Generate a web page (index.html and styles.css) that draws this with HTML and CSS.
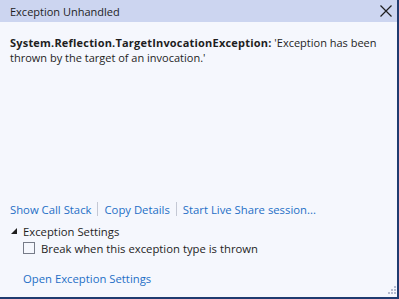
FILE: index.html
```html
<!DOCTYPE html>
<html>
<head>
<meta charset="utf-8">
<link rel="stylesheet" href="styles.css">
</head>
<body>
<div class="dialog">
  <div class="titlebar">
    <span class="title">Exception Unhandled</span>
    <svg class="close" width="12" height="12" viewBox="0 0 12 12"><path d="M0.5 0.5 L11.5 11.5 M11.5 0.5 L0.5 11.5" stroke="#1e1e1e" stroke-width="1.2" fill="none"/></svg>
  </div>
  <div class="content">
    <p class="message"><b>System.Reflection.TargetInvocationException:</b> 'Exception has been thrown by the target of an invocation.'</p>
    <div class="spacer"></div>
    <div class="links">
      <a class="link">Show Call Stack</a><span class="sep"></span><a class="link">Copy Details</a><span class="sep"></span><a class="link">Start Live Share session...</a>
    </div>
    <div class="settings-head"><span class="tri"></span><span>Exception Settings</span></div>
    <label class="check-row"><span class="box"></span><span>Break when this exception type is thrown</span></label>
    <a class="link open">Open Exception Settings</a>
  </div>
  <svg class="grip" width="10" height="10" viewBox="0 0 10 10">
    <g fill="#b4bbd0">
      <rect x="8" y="0" width="2" height="2"/>
      <rect x="5" y="3" width="2" height="2"/><rect x="8" y="3" width="2" height="2"/>
      <rect x="2" y="6" width="2" height="2"/><rect x="5" y="6" width="2" height="2"/><rect x="8" y="6" width="2" height="2"/>
    </g>
  </svg>
</div>
</body>
</html>
```
FILE: styles.css
```css
html, body { margin: 0; padding: 0; }
body { width: 399px; height: 299px; overflow: hidden; font-family: "Open Sans", "Noto Sans", sans-serif; font-size: 11.3px; color: #1e1e1e; }
.dialog { position: relative; width: 399px; height: 299px; box-sizing: border-box; border-right: 2px solid #1f3b70; border-bottom: 2px solid #1f3b70; background: #f5f7fd; display: flex; flex-direction: column; }
.titlebar { height: 22px; background: #ccd5f0; display: flex; align-items: center; justify-content: space-between; padding: 0 5px 0 10px; flex: none; }
.title { font-size: 11px; color: #1e1e1e; }
.close { display: block; }
.content { flex: 1; display: flex; flex-direction: column; padding: 0 10px 10px 10px; }
.message { margin: 13px 0 0 0; line-height: 15px; font-size: 11px; }
.message b { font-weight: 700; letter-spacing: 0.2px; }
.spacer { flex: 1; }
.links { display: flex; align-items: center; height: 18px; margin-bottom: 1px; }
.link { color: #1e6fc6; cursor: pointer; }
.sep { width: 1px; height: 14px; background: #c4c8d4; margin: 0 6px; }
.settings-head { display: flex; align-items: center; margin-top: 4px; height: 16px; }
.tri { width: 0; height: 0; border-left: 6px solid transparent; border-bottom: 6px solid #1e1e1e; margin-right: 6px; margin-left: 1px; }
.check-row { display: flex; align-items: center; height: 18px; margin-left: 13px; }
.box { width: 10px; height: 10px; border: 1px solid #767b88; background: #f5f7fd; margin-right: 6px; }
.open { margin: 14px 0 0 13px; height: 16px; line-height: 16px; }
.grip { position: absolute; right: 1px; bottom: 1px; }
```
